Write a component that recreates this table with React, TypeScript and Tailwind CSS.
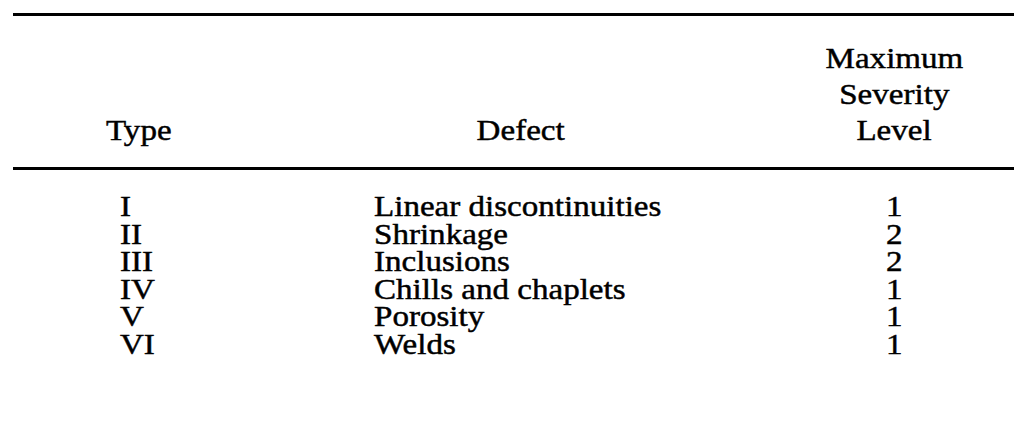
import React from "react";

const rows: [string, string, string][] = [
  ["I", "Linear discontinuities", "1"],
  ["II", "Shrinkage", "2"],
  ["III", "Inclusions", "2"],
  ["IV", "Chills and chaplets", "1"],
  ["V", "Porosity", "1"],
  ["VI", "Welds", "1"],
];

function L({ children }: { children: React.ReactNode }) {
  return <span className="inline-block origin-left scale-x-[1.14]">{children}</span>;
}
function C({ children }: { children: React.ReactNode }) {
  return <span className="inline-block origin-center scale-x-[1.14]">{children}</span>;
}

export default function App() {
  return (
    <div
      className="w-[1035px] h-[428px] bg-white text-black overflow-hidden text-[29px] [-webkit-text-stroke:0.45px_black]"
      style={{ fontFamily: '"Liberation Serif", "Times New Roman", serif' }}
    >
      <div className="ml-[13px] w-[1001px] pt-[13px]">
        <div className="h-[3px] bg-black" />
        <div className="grid grid-cols-[251px_510px_240px] h-[151px] items-end pb-[19px] leading-[36px]">
          <div className="text-center">
            <C>Type</C>
          </div>
          <div className="pl-[110px]">
            <div className="w-[294px] text-center">
              <C>Defect</C>
            </div>
          </div>
          <div className="text-center">
            <div>
              <C>Maximum</C>
            </div>
            <div>
              <C>Severity</C>
            </div>
            <div>
              <C>Level</C>
            </div>
          </div>
        </div>
        <div className="h-[3px] bg-black" />
        <div className="grid grid-cols-[251px_510px_240px] pt-[23px] leading-[27.6px]">
          {rows.map(([t, d, l]) => (
            <React.Fragment key={t}>
              <div className="pl-[107px]">
                <L>{t}</L>
              </div>
              <div className="pl-[110px]">
                <L>{d}</L>
              </div>
              <div className="text-center">
                <C>{l}</C>
              </div>
            </React.Fragment>
          ))}
        </div>
      </div>
    </div>
  );
}
